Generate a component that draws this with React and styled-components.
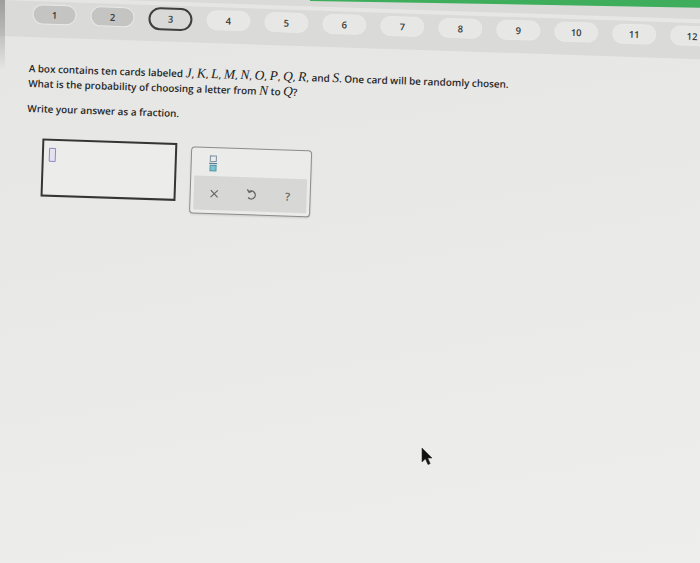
import React from 'react';
import styled, { createGlobalStyle } from 'styled-components';

const GlobalStyle = createGlobalStyle`
  html, body {
    margin: 0;
    padding: 0;
    background: #e8e8e6;
  }
  body {
    font-family: 'Open Sans', 'Liberation Sans', sans-serif;
  }
`;

const Page = styled.div`
  position: relative;
  width: 700px;
  height: 563px;
  overflow: hidden;
  background: linear-gradient(170deg, #e5e5e3 0%, #e9e9e7 45%, #eeeeec 100%);
`;

// the photo is taken a little askew, so the whole sheet is turned slightly
const Sheet = styled.div`
  width: 730px;
  height: 620px;
  transform: rotate(1.9deg);
  transform-origin: 0 0;
`;

const Header = styled.nav`
  box-sizing: border-box;
  height: 36px;
  display: flex;
  align-items: center;
  gap: 14px;
  padding: 0 0 10px 33px;
  background: #dadad8;
  box-shadow: 0 -40px 0 #dadad8;
`;

const Pill = styled.div`
  box-sizing: border-box;
  width: 44px;
  height: ${p => (p.$current ? 23 : 20)}px;
  border-radius: 12px;
  display: flex;
  align-items: center;
  justify-content: center;
  font-size: 9.5px;
  font-weight: 600;
  color: #3a3a3a;
  background: ${p => (p.$done ? '#c4c4c2' : p.$current ? '#d9d9d7' : '#e7e7e5')};
  border: ${p => (p.$current ? '2px solid #3f3f3f' : '1.5px solid #e9e9e7')};
`;

const GreenBar = styled.div`
  position: absolute;
  top: 0;
  left: 310px;
  width: 390px;
  height: 9px;
  background: #3fae5c;
  clip-path: polygon(0 0, 100% 0, 100% 85%, 0 10%);
`;

const LeftEdge = styled.div`
  position: absolute;
  top: 0;
  left: 0;
  width: 5px;
  height: 70px;
  background: linear-gradient(180deg, #9d9d9b, rgba(200, 200, 198, 0));
`;

const Question = styled.section`
  padding: 24px 0 0 31px;
  color: #262626;
  font-size: 9.9px;
  font-weight: 600;
`;

const Line = styled.p`
  margin: 0;
  line-height: 15px;
  height: 15px;
  white-space: nowrap;
  margin-top: ${p => p.$gap || 0}px;
`;

const M = styled.span`
  font-family: 'Liberation Serif', 'Times New Roman', serif;
  font-style: italic;
  font-weight: 400;
  font-size: 13.5px;
  line-height: 1;
  color: #222;
`;

const AnswerRow = styled.div`
  display: flex;
  align-items: flex-start;
  gap: 14px;
  padding: 22px 0 0 47px;
`;

const AnswerBox = styled.div`
  box-sizing: border-box;
  width: 135px;
  height: 58px;
  border: 2px solid #353535;
  background: #ececea;
  padding: 7px 0 0 5px;
`;

const Caret = styled.div`
  width: 5px;
  height: 12px;
  border: 1px solid #8f88c6;
  border-radius: 1px;
  background: #e4e2f0;
`;

const Tools = styled.div`
  box-sizing: border-box;
  margin-top: 3px;
  width: 121px;
  height: 67px;
  border: 1.5px solid #8d8d8b;
  border-radius: 4px;
  background: #ebebe9;
  box-shadow: 0 1px 2px rgba(0, 0, 0, 0.12);
  padding: 3px;
  display: flex;
  flex-direction: column;
`;

const ToolsTop = styled.div`
  height: 25px;
  display: flex;
  align-items: center;
  padding-left: 14px;
`;

const ToolsBar = styled.div`
  flex: 1;
  background: #d7d7d5;
  border-radius: 1px;
  display: flex;
  align-items: center;
  padding-left: 14px;
  gap: 25px;
`;

const ToolIcon = styled.span`
  width: 12px;
  height: 12px;
  display: flex;
  align-items: center;
  justify-content: center;
  color: #666;
  font-size: 11px;
  font-weight: 600;
`;

const Pointer = styled.svg`
  position: absolute;
  left: 421px;
  top: 447px;
`;

const FractionIcon = () => (
  <svg width="9" height="17" viewBox="0 0 9 17">
    <rect x="1.5" y="0.8" width="6" height="5.5" fill="none" stroke="#7c8ea0" strokeWidth="1" />
    <line x1="0.5" y1="8.3" x2="8.5" y2="8.3" stroke="#5a7f95" strokeWidth="1.2" />
    <rect x="1.5" y="10.3" width="6" height="5.5" fill="#7dc3cf" stroke="#4e96a8" strokeWidth="1" />
  </svg>
);

const CloseIcon = () => (
  <svg width="9" height="9" viewBox="0 0 9 9">
    <path d="M1 1 L8 8 M8 1 L1 8" stroke="#666" strokeWidth="1.2" fill="none" />
  </svg>
);

const UndoIcon = () => (
  <svg width="11" height="12" viewBox="0 0 11 12">
    <path d="M3 3.5 A4 4 0 1 1 2.6 9.2" stroke="#666" strokeWidth="1.3" fill="none" />
    <path d="M1.5 1 L3.4 4 L6.3 2.6" stroke="#666" strokeWidth="1.3" fill="none" />
  </svg>
);

const pages = [1, 2, 3, 4, 5, 6, 7, 8, 9, 10, 11, 12];

export default function App() {
  return (
    <Page>
      <GlobalStyle />
      <Sheet>
        <Header>
          {pages.map(n => (
            <Pill key={n} $done={n < 3} $current={n === 3}>{n}</Pill>
          ))}
        </Header>
        <Question>
          <Line>
            A box contains ten cards labeled <M>J</M>, <M>K</M>, <M>L</M>, <M>M</M>, <M>N</M>, <M>O</M>, <M>P</M>, <M>Q</M>, <M>R</M>, and <M>S</M>. One card will be randomly chosen.
          </Line>
          <Line>
            What is the probability of choosing a letter from <M>N</M> to <M>Q</M>?
          </Line>
          <Line $gap={10}>Write your answer as a fraction.</Line>
        </Question>
        <AnswerRow>
          <AnswerBox>
            <Caret />
          </AnswerBox>
          <Tools>
            <ToolsTop>
              <FractionIcon />
            </ToolsTop>
            <ToolsBar>
              <ToolIcon><CloseIcon /></ToolIcon>
              <ToolIcon><UndoIcon /></ToolIcon>
              <ToolIcon>?</ToolIcon>
            </ToolsBar>
          </Tools>
        </AnswerRow>
      </Sheet>
      <GreenBar />
      <LeftEdge />
      <Pointer width="12" height="19" viewBox="0 0 12 19">
        <path d="M1 1 L1 15 L4.4 11.8 L7 17.6 L9.2 16.6 L6.7 11 L11 11 Z" fill="#111" stroke="#333" strokeWidth="0.6" />
      </Pointer>
    </Page>
  );
}
